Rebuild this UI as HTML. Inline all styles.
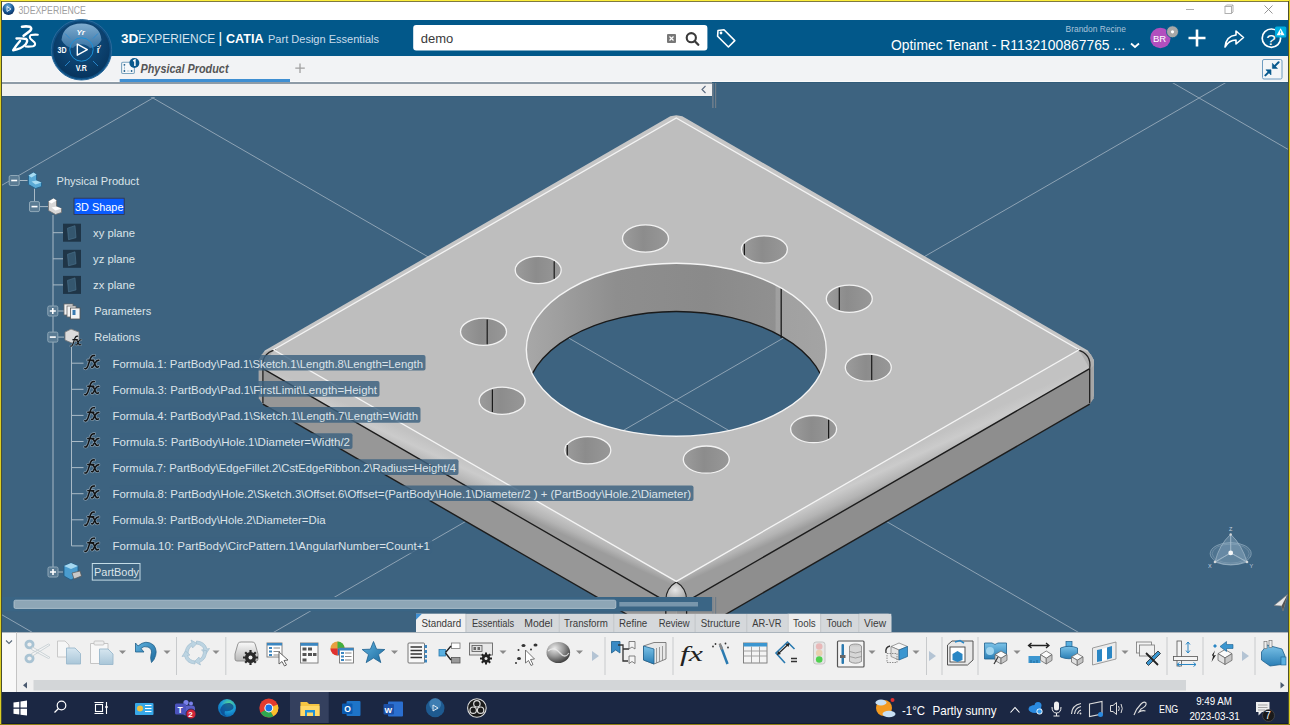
<!DOCTYPE html>
<html><head><meta charset="utf-8">
<style>
*{margin:0;padding:0;box-sizing:border-box}
html,body{width:1290px;height:725px;overflow:hidden;background:#3d6380;font-family:"Liberation Sans",sans-serif;position:relative}
.a{position:absolute}
.t{position:absolute;white-space:nowrap;line-height:1}
#title{left:0;top:0;width:1290px;height:20px;background:#fff}
#hdr{left:0;top:20px;width:1290px;height:36px;background:#02588a}
#tabs{left:0;top:56px;width:1290px;height:26px;background:#f2f3f5;border-bottom:1px solid #f9fafa}
#phdr{left:0;top:82px;width:712px;height:15px;background:#f0f0f0;border-top:2px solid #8e9ba6;border-bottom:1px solid #355d7a}
#tb{left:0;top:632px;width:1290px;height:60px;background:#f0f0f0}
#task{left:0;top:692px;width:1290px;height:33px;background:#1b2743}
.tree{color:#e6ecf0;font-size:11px}
.fb{position:absolute;height:16px;background:rgba(45,90,125,0.7);border-radius:2px}
.st{position:absolute;top:614px;height:18px;background:#d5d8db;border-right:1px solid #c3c7ca}
.stx{position:absolute;top:618px;font-size:11px;color:#3a3a3a;white-space:nowrap;line-height:1}
</style></head><body>
<svg class="a" style="left:0;top:0" width="1290" height="725" viewBox="0 0 1290 725"><defs><clipPath id="vpc"><rect x="2" y="82" width="1286" height="550"/></clipPath></defs><g clip-path="url(#vpc)"><line x1="0" y1="9.7" x2="1290" y2="754.5" stroke="#8ea3b4" stroke-width="1" /><line x1="0" y1="790.3" x2="1290" y2="45.5" stroke="#8ea3b4" stroke-width="1" /><line x1="0" y1="-594.3" x2="1290" y2="150.5" stroke="#8ea3b4" stroke-width="1" /><line x1="0" y1="186.3" x2="1290" y2="-558.5" stroke="#8ea3b4" stroke-width="1" /><line x1="0" y1="613.7" x2="1290" y2="1358.5" stroke="#8ea3b4" stroke-width="1" /><line x1="0" y1="1394.3" x2="1290" y2="649.5" stroke="#8ea3b4" stroke-width="1" /><defs><linearGradient id="filR" gradientUnits="userSpaceOnUse" x1="900" y1="452" x2="912" y2="478"><stop offset="0" stop-color="#c2c2c2"/><stop offset="0.35" stop-color="#cbcbcb"/><stop offset="0.75" stop-color="#b4b4b4"/><stop offset="1" stop-color="#9c9c9c"/></linearGradient><linearGradient id="filL" gradientUnits="userSpaceOnUse" x1="452" y1="452" x2="440" y2="478"><stop offset="0" stop-color="#c2c2c2"/><stop offset="0.35" stop-color="#cbcbcb"/><stop offset="0.75" stop-color="#b4b4b4"/><stop offset="1" stop-color="#9c9c9c"/></linearGradient><linearGradient id="wallBig" gradientUnits="userSpaceOnUse" x1="526" y1="0" x2="826" y2="0"><stop offset="0" stop-color="#a8a8a8"/><stop offset="0.3" stop-color="#8e8e8e"/><stop offset="0.6" stop-color="#8a8a8a"/><stop offset="0.83" stop-color="#909090"/><stop offset="0.834" stop-color="#a0a0a0"/><stop offset="1" stop-color="#a4a4a4"/></linearGradient><radialGradient id="cornerG" cx="0.4" cy="0.4" r="0.6"><stop offset="0" stop-color="#d0d0d0"/><stop offset="1" stop-color="#9a9a9a"/></radialGradient></defs><polygon points="670.3,116.3 676.3,115.2 682.3,116.3 1087.8,350.4 1093.8,359.8 1093.8,395.9 1087.7,405.4 676.3,642.9 264.9,405.4 258.8,395.9 258.8,359.8 264.8,350.4" fill="#c6c6c6" /><polygon points="262.9,368.7 676.3,607.4 676.3,642.9 262.9,404.2" fill="#979797" /><polygon points="676.3,607.4 1089.7,368.7 1089.7,404.2 676.3,642.9" fill="#8e8e8e" /><polygon points="1089.7,368.7 1093.8,364.7 1093.8,398.2 1089.7,404.2" fill="#a6a6a6" /><polygon points="262.9,368.7 258.8,364.7 258.8,398.2 262.9,404.2" fill="#a6a6a6" /><polygon points="676.3,581.4 1079.0,349.7 1089.7,368.7 676.3,607.4" fill="url(#filR)" /><polygon points="676.3,581.4 273.6,349.7 262.9,368.7 676.3,607.4" fill="url(#filL)" /><path d="M1079,349.7 Q1094.8,350.7 1093.8,365.7235099999999 L1089.7,368.7235099999999 Z" fill="#b0b0b0"/><path d="M273.6,349.7 Q257.8,350.7 258.8,365.72351 L262.9,368.72351 Z" fill="#b0b0b0"/><polygon points="676.3,118.0 1079.0,349.7 676.3,581.4 273.6,349.7" fill="#bebebe" /><polyline points="262.9,368.7 676.3,607.4 1089.7,368.7" fill="none" stroke="#1c1c1c" stroke-width="1.4"/><polyline points="262.9,404.2 676.3,642.9 1089.7,404.2" fill="none" stroke="#1c1c1c" stroke-width="1.4"/><line x1="1089.7" y1="368.7" x2="1089.7" y2="403.2" stroke="#1c1c1c" stroke-width="1.3"/><line x1="262.9" y1="368.7" x2="262.9" y2="403.2" stroke="#1c1c1c" stroke-width="1.3"/><path d="M1077,349.7 Q1091.8,353.7 1089.7,368.7235099999999" fill="none" stroke="#222" stroke-width="1.2"/><path d="M275.6,349.7 Q260.8,353.7 262.9,368.72351" fill="none" stroke="#222" stroke-width="1.2"/><radialGradient id="lensG" cx="0.45" cy="0.45" r="0.6"><stop offset="0" stop-color="#e6e6e6"/><stop offset="1" stop-color="#a8a8a8"/></radialGradient><path d="M665.8,600 Q666,588 676.3,582 Q686.5,588 686.6,600 Z" fill="url(#lensG)" stroke="#222" stroke-width="1.2"/><path d="M665.8,597 V640 M686.6,597 V640" stroke="#1c1c1c" stroke-width="1.3"/><rect x="712.3" y="597" width="1.2" height="35" fill="#7a8590"/><rect x="715" y="597" width="1.2" height="35" fill="#6f7c88"/><polygon points="676.3,118.0 1079.0,349.7 676.3,581.4 273.6,349.7" fill="none" stroke="#f4f4f4" stroke-width="1.3"/><clipPath id="bigTop"><ellipse cx="676.3" cy="349.7" rx="150" ry="86.5"/></clipPath><ellipse cx="676.3" cy="349.7" rx="150" ry="86.5" fill="url(#wallBig)"/><g clip-path="url(#bigTop)"><ellipse cx="676.3" cy="398.0" rx="150" ry="86.5" fill="#3d6380"/><clipPath id="bigBot"><ellipse cx="676.3" cy="398.0" rx="150" ry="86.5"/></clipPath><g clip-path="url(#bigBot)"><line x1="0" y1="9.7" x2="1290" y2="754.5" stroke="#8ea3b4" stroke-width="1" /><line x1="0" y1="790.3" x2="1290" y2="45.5" stroke="#8ea3b4" stroke-width="1" /><line x1="0" y1="-594.3" x2="1290" y2="150.5" stroke="#8ea3b4" stroke-width="1" /><line x1="0" y1="186.3" x2="1290" y2="-558.5" stroke="#8ea3b4" stroke-width="1" /><line x1="0" y1="613.7" x2="1290" y2="1358.5" stroke="#8ea3b4" stroke-width="1" /><line x1="0" y1="1394.3" x2="1290" y2="649.5" stroke="#8ea3b4" stroke-width="1" /></g><ellipse cx="676.3" cy="398.0" rx="150" ry="86.5" fill="none" stroke="#1a1a1a" stroke-width="1.3"/><line x1="781.2" y1="285" x2="781.2" y2="338" stroke="#1a1a1a" stroke-width="1.3"/></g><ellipse cx="676.3" cy="349.7" rx="150" ry="86.5" fill="none" stroke="#f4f4f4" stroke-width="1.4"/><linearGradient id="hg0" gradientUnits="userSpaceOnUse" x1="622.5" y1="0" x2="668.5" y2="0"><stop offset="0" stop-color="#9c9c9c"/><stop offset="0.45" stop-color="#8c8c8c"/><stop offset="1" stop-color="#989898"/></linearGradient><ellipse cx="645.5" cy="238.5" rx="23" ry="13.6" fill="url(#hg0)" stroke="#f2f2f2" stroke-width="1.3"/><linearGradient id="hg1" gradientUnits="userSpaceOnUse" x1="741.4" y1="0" x2="787.4" y2="0"><stop offset="0" stop-color="#9c9c9c"/><stop offset="0.45" stop-color="#8c8c8c"/><stop offset="1" stop-color="#989898"/></linearGradient><ellipse cx="764.4" cy="249.5" rx="23" ry="13.6" fill="url(#hg1)" stroke="#f2f2f2" stroke-width="1.3"/><line x1="744.4" y1="243.8" x2="744.4" y2="255.2" stroke="#1a1a1a" stroke-width="1.2"/><linearGradient id="hg2" gradientUnits="userSpaceOnUse" x1="826.3" y1="0" x2="872.3" y2="0"><stop offset="0" stop-color="#9c9c9c"/><stop offset="0.45" stop-color="#8c8c8c"/><stop offset="1" stop-color="#989898"/></linearGradient><ellipse cx="849.3" cy="298.7" rx="23" ry="13.6" fill="url(#hg2)" stroke="#f2f2f2" stroke-width="1.3"/><line x1="839.3" y1="287.5" x2="839.3" y2="309.9" stroke="#1a1a1a" stroke-width="1.2"/><linearGradient id="hg3" gradientUnits="userSpaceOnUse" x1="845.3" y1="0" x2="891.3" y2="0"><stop offset="0" stop-color="#9c9c9c"/><stop offset="0.45" stop-color="#8c8c8c"/><stop offset="1" stop-color="#989898"/></linearGradient><ellipse cx="868.3" cy="367.6" rx="23" ry="13.6" fill="url(#hg3)" stroke="#f2f2f2" stroke-width="1.3"/><line x1="871.6999999999999" y1="355.1" x2="871.6999999999999" y2="380.1" stroke="#1a1a1a" stroke-width="1.2"/><linearGradient id="hg4" gradientUnits="userSpaceOnUse" x1="790.6" y1="0" x2="836.6" y2="0"><stop offset="0" stop-color="#9c9c9c"/><stop offset="0.45" stop-color="#8c8c8c"/><stop offset="1" stop-color="#989898"/></linearGradient><ellipse cx="813.6" cy="429.1" rx="23" ry="13.6" fill="url(#hg4)" stroke="#f2f2f2" stroke-width="1.3"/><line x1="828.6" y1="419.8" x2="828.6" y2="438.4" stroke="#1a1a1a" stroke-width="1.2"/><linearGradient id="hg5" gradientUnits="userSpaceOnUse" x1="683.3" y1="0" x2="729.3" y2="0"><stop offset="0" stop-color="#9c9c9c"/><stop offset="0.45" stop-color="#8c8c8c"/><stop offset="1" stop-color="#989898"/></linearGradient><ellipse cx="706.3" cy="459.6" rx="23" ry="13.6" fill="url(#hg5)" stroke="#f2f2f2" stroke-width="1.3"/><linearGradient id="hg6" gradientUnits="userSpaceOnUse" x1="564.8" y1="0" x2="610.8" y2="0"><stop offset="0" stop-color="#9c9c9c"/><stop offset="0.45" stop-color="#8c8c8c"/><stop offset="1" stop-color="#989898"/></linearGradient><ellipse cx="587.8" cy="450.3" rx="23" ry="13.6" fill="url(#hg6)" stroke="#f2f2f2" stroke-width="1.3"/><line x1="567.3" y1="445.1" x2="567.3" y2="455.5" stroke="#1a1a1a" stroke-width="1.2"/><linearGradient id="hg7" gradientUnits="userSpaceOnUse" x1="479.1" y1="0" x2="525.1" y2="0"><stop offset="0" stop-color="#9c9c9c"/><stop offset="0.45" stop-color="#8c8c8c"/><stop offset="1" stop-color="#989898"/></linearGradient><ellipse cx="502.1" cy="400.8" rx="23" ry="13.6" fill="url(#hg7)" stroke="#f2f2f2" stroke-width="1.3"/><line x1="492.40000000000003" y1="389.5" x2="492.40000000000003" y2="412.1" stroke="#1a1a1a" stroke-width="1.2"/><linearGradient id="hg8" gradientUnits="userSpaceOnUse" x1="460.5" y1="0" x2="506.5" y2="0"><stop offset="0" stop-color="#9c9c9c"/><stop offset="0.45" stop-color="#8c8c8c"/><stop offset="1" stop-color="#989898"/></linearGradient><ellipse cx="483.5" cy="331.8" rx="23" ry="13.6" fill="url(#hg8)" stroke="#f2f2f2" stroke-width="1.3"/><line x1="487.2" y1="319.4" x2="487.2" y2="344.2" stroke="#1a1a1a" stroke-width="1.2"/><linearGradient id="hg9" gradientUnits="userSpaceOnUse" x1="515.2" y1="0" x2="561.2" y2="0"><stop offset="0" stop-color="#9c9c9c"/><stop offset="0.45" stop-color="#8c8c8c"/><stop offset="1" stop-color="#989898"/></linearGradient><ellipse cx="538.2" cy="270" rx="23" ry="13.6" fill="url(#hg9)" stroke="#f2f2f2" stroke-width="1.3"/><line x1="554.2" y1="261.2" x2="554.2" y2="278.8" stroke="#1a1a1a" stroke-width="1.2"/><g opacity="0.95"><ellipse cx="1230.7" cy="553.6" rx="20.5" ry="11" fill="rgba(140,170,195,0.25)" stroke="#8fa9bc" stroke-width="0.8"/><ellipse cx="1230.7" cy="553.6" rx="18.5" ry="9.5" fill="none" stroke="#7f9bb0" stroke-width="0.6"/><path d="M1230.7,552.9 L1230.7,534.3 Q1242,545 1247,562 Z" fill="rgba(170,195,215,0.35)" stroke="#a9bfcf" stroke-width="0.7"/><path d="M1230.7,552.9 L1230.7,534.3 Q1219,545 1215,562 Z" fill="rgba(170,195,215,0.3)" stroke="#a9bfcf" stroke-width="0.7"/><path d="M1230.7,552.9 L1215,562 Q1230.7,568 1247,562 Z" fill="rgba(150,180,200,0.3)" stroke="#a9bfcf" stroke-width="0.7"/><circle cx="1230.7" cy="552.9" r="2.4" fill="#fff"/><circle cx="1230.7" cy="534.5" r="1.2" fill="#ddd"/><circle cx="1215" cy="562" r="1.3" fill="#ddd"/><circle cx="1247" cy="562" r="1.3" fill="#ddd"/><g font-family="Liberation Sans" font-size="5.5" fill="#cdd8e0"><text x="1229" y="531">Z</text><text x="1208" y="567.5">X</text><text x="1249.5" y="567.5">Y</text></g></g><path d="M1287.5,594.5 L1274,605.5 L1281.5,606 L1283,611 Z" fill="#e8e8e8" stroke="#777" stroke-width="0.6"/><path d="M1287.5,594.5 L1281.5,606 L1283,611 Z" fill="#555"/></g></svg>
<svg class="a" style="left:0;top:0" width="760" height="612" viewBox="0 0 760 612"><rect x="110" y="354.9" width="315.5" height="15.7" rx="2" fill="rgba(60,98,128,0.82)"/><rect x="110" y="381.0" width="269.5" height="15.7" rx="2" fill="rgba(60,98,128,0.82)"/><rect x="110" y="407.1" width="310.5" height="15.7" rx="2" fill="rgba(60,98,128,0.82)"/><rect x="110" y="433.2" width="242.5" height="15.7" rx="2" fill="rgba(60,98,128,0.82)"/><rect x="110" y="459.3" width="348.5" height="15.7" rx="2" fill="rgba(60,98,128,0.82)"/><rect x="110" y="485.4" width="583.5" height="15.7" rx="2" fill="rgba(60,98,128,0.82)"/><rect x="110" y="511.5" width="218.0" height="15.7" rx="2" fill="rgba(60,98,128,0.82)"/><rect x="110" y="537.6" width="322.3" height="15.7" rx="2" fill="rgba(60,98,128,0.82)"/><g stroke="#a9bac6" stroke-width="1" fill="none"><path d="M19.5,180.5 H27.5 M34.5,188.5 V201.5 M39.5,206.6 H48"/><path d="M53,215 V567.3"/><path d="M53,232.7 H63"/><path d="M53,258.8 H63"/><path d="M53,284.9 H63"/><path d="M58,311.0 H64"/><path d="M58,337.1 H64"/><path d="M71.5,345 V545.9"/><path d="M71.5,363.2 H83.5"/><path d="M71.5,389.3 H83.5"/><path d="M71.5,415.4 H83.5"/><path d="M71.5,441.5 H83.5"/><path d="M71.5,467.6 H83.5"/><path d="M71.5,493.7 H83.5"/><path d="M71.5,519.8 H83.5"/><path d="M71.5,545.9 H83.5"/><path d="M58,572.0 H63"/></g><rect x="9.2" y="175.5" width="10" height="10" rx="1.5" fill="#5a7b93" stroke="#8fa8b8" stroke-width="1"/><path d="M11.2,180.5 H17.2" stroke="#fff" stroke-width="1.6"/><rect x="29.5" y="201.6" width="10" height="10" rx="1.5" fill="#5a7b93" stroke="#8fa8b8" stroke-width="1"/><path d="M31.5,206.6 H37.5" stroke="#fff" stroke-width="1.6"/><rect x="47.8" y="306.0" width="10" height="10" rx="1.5" fill="#5a7b93" stroke="#8fa8b8" stroke-width="1"/><path d="M49.8,311.0 H55.8 M52.8,308.0 V314.0" stroke="#fff" stroke-width="1.6"/><rect x="47.8" y="332.1" width="10" height="10" rx="1.5" fill="#5a7b93" stroke="#8fa8b8" stroke-width="1"/><path d="M49.8,337.1 H55.8" stroke="#fff" stroke-width="1.6"/><rect x="48.0" y="567.0" width="10" height="10" rx="1.5" fill="#5a7b93" stroke="#8fa8b8" stroke-width="1"/><path d="M50.0,572.0 H56.0 M53.0,569.0 V575.0" stroke="#fff" stroke-width="1.6"/><path d="M28.5,175.5 L33.5,172.5 L36.5,174.5 L36.5,180.5 L41.5,182.5 L41.5,186.5 L35.5,188.5 L28.5,184.5 Z" fill="#5aaad6" stroke="#1e5f8a" stroke-width="0.8"/><path d="M28.5,175.5 L33.5,172.5 L36.5,174.5 L31.5,177.5 Z" fill="#a8dcf2"/><path d="M31.5,181.5 L36.5,180.5 L41.5,182.5 L35.5,184.5 Z" fill="#a8dcf2"/><path d="M48.5,201.5 L53.5,198.5 L56.5,200.5 L56.5,206.5 L61.5,208.5 L61.5,212.5 L55.5,214.5 L48.5,210.5 Z" fill="#d8d8d8" stroke="#707070" stroke-width="0.8"/><path d="M48.5,201.5 L53.5,198.5 L56.5,200.5 L51.5,203.5 Z" fill="#ffffff"/><path d="M51.5,207.5 L56.5,206.5 L61.5,208.5 L55.5,210.5 Z" fill="#ffffff"/><rect x="63" y="223.7" width="18" height="18" fill="#1f3547"/><path d="M67.5,228.2 L75,225.7 L76,237.7 L68.5,239.7 Z" fill="#34566e" stroke="#4e7690" stroke-width="0.6"/><rect x="63" y="249.8" width="18" height="18" fill="#1f3547"/><path d="M67.5,254.3 L75,251.8 L76,263.8 L68.5,265.8 Z" fill="#34566e" stroke="#4e7690" stroke-width="0.6"/><rect x="63" y="275.9" width="18" height="18" fill="#1f3547"/><path d="M67.5,280.4 L75,277.9 L76,289.9 L68.5,291.9 Z" fill="#34566e" stroke="#4e7690" stroke-width="0.6"/><rect x="64" y="304.0" width="9" height="11" fill="#f4f4f4" stroke="#666" stroke-width="0.8"/><rect x="67" y="306.0" width="9" height="11" fill="#f4f4f4" stroke="#666" stroke-width="0.8"/><rect x="70.5" y="308.0" width="9.5" height="11" fill="#f4f4f4" stroke="#555" stroke-width="0.8"/><rect x="72.5" y="310.0" width="3" height="5" fill="#3a7ab0"/><path d="M65,332.1 L71,329.1 L79,332.1 L79,340.1 L72,343.1 L65,340.1 Z" fill="#dcdcdc" stroke="#777" stroke-width="0.8"/><path d="M70.6,345.95000000000005 Q71.875,346.70000000000005 73.0,343.85 L74.875,338.225 Q75.85,335.82500000000005 77.875,336.20000000000005 M72.85,339.65000000000003 H77.35 M75.4,339.95000000000005 Q76.75,339.35 77.875,341.975 L79.0,344.45000000000005 Q79.75,345.35 80.875,344.6 M81.1,339.8 Q79.6,339.5 78.25,341.975 L77.125,344.225 Q76.45,345.35 75.7,344.90000000000003" fill="none" stroke="#b9c6cf" stroke-opacity="0.55" stroke-width="2.25" stroke-linecap="round"/><path d="M70.6,345.95000000000005 Q71.875,346.70000000000005 73.0,343.85 L74.875,338.225 Q75.85,335.82500000000005 77.875,336.20000000000005 M72.85,339.65000000000003 H77.35 M75.4,339.95000000000005 Q76.75,339.35 77.875,341.975 L79.0,344.45000000000005 Q79.75,345.35 80.875,344.6 M81.1,339.8 Q79.6,339.5 78.25,341.975 L77.125,344.225 Q76.45,345.35 75.7,344.90000000000003" fill="none" stroke="#121212" stroke-width="1.09" stroke-linecap="round"/><path d="M84.8,368.5 Q86.5,369.5 88.0,365.7 L90.5,358.2 Q91.8,355.0 94.5,355.5 M87.8,360.09999999999997 H93.8 M91.2,360.5 Q93.0,359.7 94.5,363.2 L96.0,366.5 Q97.0,367.7 98.5,366.7 M98.8,360.3 Q96.8,359.9 95.0,363.2 L93.5,366.2 Q92.6,367.7 91.6,367.09999999999997" fill="none" stroke="#b9c6cf" stroke-opacity="0.55" stroke-width="3.00" stroke-linecap="round"/><path d="M84.8,368.5 Q86.5,369.5 88.0,365.7 L90.5,358.2 Q91.8,355.0 94.5,355.5 M87.8,360.09999999999997 H93.8 M91.2,360.5 Q93.0,359.7 94.5,363.2 L96.0,366.5 Q97.0,367.7 98.5,366.7 M98.8,360.3 Q96.8,359.9 95.0,363.2 L93.5,366.2 Q92.6,367.7 91.6,367.09999999999997" fill="none" stroke="#121212" stroke-width="1.45" stroke-linecap="round"/><path d="M84.8,394.6 Q86.5,395.6 88.0,391.8 L90.5,384.3 Q91.8,381.1 94.5,381.6 M87.8,386.2 H93.8 M91.2,386.6 Q93.0,385.8 94.5,389.3 L96.0,392.6 Q97.0,393.8 98.5,392.8 M98.8,386.40000000000003 Q96.8,386.0 95.0,389.3 L93.5,392.3 Q92.6,393.8 91.6,393.2" fill="none" stroke="#b9c6cf" stroke-opacity="0.55" stroke-width="3.00" stroke-linecap="round"/><path d="M84.8,394.6 Q86.5,395.6 88.0,391.8 L90.5,384.3 Q91.8,381.1 94.5,381.6 M87.8,386.2 H93.8 M91.2,386.6 Q93.0,385.8 94.5,389.3 L96.0,392.6 Q97.0,393.8 98.5,392.8 M98.8,386.40000000000003 Q96.8,386.0 95.0,389.3 L93.5,392.3 Q92.6,393.8 91.6,393.2" fill="none" stroke="#121212" stroke-width="1.45" stroke-linecap="round"/><path d="M84.8,420.70000000000005 Q86.5,421.70000000000005 88.0,417.90000000000003 L90.5,410.40000000000003 Q91.8,407.20000000000005 94.5,407.70000000000005 M87.8,412.3 H93.8 M91.2,412.70000000000005 Q93.0,411.90000000000003 94.5,415.40000000000003 L96.0,418.70000000000005 Q97.0,419.90000000000003 98.5,418.90000000000003 M98.8,412.50000000000006 Q96.8,412.1 95.0,415.40000000000003 L93.5,418.40000000000003 Q92.6,419.90000000000003 91.6,419.3" fill="none" stroke="#b9c6cf" stroke-opacity="0.55" stroke-width="3.00" stroke-linecap="round"/><path d="M84.8,420.70000000000005 Q86.5,421.70000000000005 88.0,417.90000000000003 L90.5,410.40000000000003 Q91.8,407.20000000000005 94.5,407.70000000000005 M87.8,412.3 H93.8 M91.2,412.70000000000005 Q93.0,411.90000000000003 94.5,415.40000000000003 L96.0,418.70000000000005 Q97.0,419.90000000000003 98.5,418.90000000000003 M98.8,412.50000000000006 Q96.8,412.1 95.0,415.40000000000003 L93.5,418.40000000000003 Q92.6,419.90000000000003 91.6,419.3" fill="none" stroke="#121212" stroke-width="1.45" stroke-linecap="round"/><path d="M84.8,446.8 Q86.5,447.8 88.0,444.0 L90.5,436.5 Q91.8,433.3 94.5,433.8 M87.8,438.4 H93.8 M91.2,438.8 Q93.0,438.0 94.5,441.5 L96.0,444.8 Q97.0,446.0 98.5,445.0 M98.8,438.6 Q96.8,438.2 95.0,441.5 L93.5,444.5 Q92.6,446.0 91.6,445.4" fill="none" stroke="#b9c6cf" stroke-opacity="0.55" stroke-width="3.00" stroke-linecap="round"/><path d="M84.8,446.8 Q86.5,447.8 88.0,444.0 L90.5,436.5 Q91.8,433.3 94.5,433.8 M87.8,438.4 H93.8 M91.2,438.8 Q93.0,438.0 94.5,441.5 L96.0,444.8 Q97.0,446.0 98.5,445.0 M98.8,438.6 Q96.8,438.2 95.0,441.5 L93.5,444.5 Q92.6,446.0 91.6,445.4" fill="none" stroke="#121212" stroke-width="1.45" stroke-linecap="round"/><path d="M84.8,472.90000000000003 Q86.5,473.90000000000003 88.0,470.1 L90.5,462.6 Q91.8,459.40000000000003 94.5,459.90000000000003 M87.8,464.5 H93.8 M91.2,464.90000000000003 Q93.0,464.1 94.5,467.6 L96.0,470.90000000000003 Q97.0,472.1 98.5,471.1 M98.8,464.70000000000005 Q96.8,464.3 95.0,467.6 L93.5,470.6 Q92.6,472.1 91.6,471.5" fill="none" stroke="#b9c6cf" stroke-opacity="0.55" stroke-width="3.00" stroke-linecap="round"/><path d="M84.8,472.90000000000003 Q86.5,473.90000000000003 88.0,470.1 L90.5,462.6 Q91.8,459.40000000000003 94.5,459.90000000000003 M87.8,464.5 H93.8 M91.2,464.90000000000003 Q93.0,464.1 94.5,467.6 L96.0,470.90000000000003 Q97.0,472.1 98.5,471.1 M98.8,464.70000000000005 Q96.8,464.3 95.0,467.6 L93.5,470.6 Q92.6,472.1 91.6,471.5" fill="none" stroke="#121212" stroke-width="1.45" stroke-linecap="round"/><path d="M84.8,499.00000000000006 Q86.5,500.00000000000006 88.0,496.20000000000005 L90.5,488.70000000000005 Q91.8,485.50000000000006 94.5,486.00000000000006 M87.8,490.6 H93.8 M91.2,491.00000000000006 Q93.0,490.20000000000005 94.5,493.70000000000005 L96.0,497.00000000000006 Q97.0,498.20000000000005 98.5,497.20000000000005 M98.8,490.80000000000007 Q96.8,490.40000000000003 95.0,493.70000000000005 L93.5,496.70000000000005 Q92.6,498.20000000000005 91.6,497.6" fill="none" stroke="#b9c6cf" stroke-opacity="0.55" stroke-width="3.00" stroke-linecap="round"/><path d="M84.8,499.00000000000006 Q86.5,500.00000000000006 88.0,496.20000000000005 L90.5,488.70000000000005 Q91.8,485.50000000000006 94.5,486.00000000000006 M87.8,490.6 H93.8 M91.2,491.00000000000006 Q93.0,490.20000000000005 94.5,493.70000000000005 L96.0,497.00000000000006 Q97.0,498.20000000000005 98.5,497.20000000000005 M98.8,490.80000000000007 Q96.8,490.40000000000003 95.0,493.70000000000005 L93.5,496.70000000000005 Q92.6,498.20000000000005 91.6,497.6" fill="none" stroke="#121212" stroke-width="1.45" stroke-linecap="round"/><path d="M84.8,525.1 Q86.5,526.1 88.0,522.3 L90.5,514.8 Q91.8,511.6 94.5,512.1 M87.8,516.7 H93.8 M91.2,517.1 Q93.0,516.3 94.5,519.8 L96.0,523.1 Q97.0,524.3 98.5,523.3 M98.8,516.9 Q96.8,516.5 95.0,519.8 L93.5,522.8 Q92.6,524.3 91.6,523.7" fill="none" stroke="#b9c6cf" stroke-opacity="0.55" stroke-width="3.00" stroke-linecap="round"/><path d="M84.8,525.1 Q86.5,526.1 88.0,522.3 L90.5,514.8 Q91.8,511.6 94.5,512.1 M87.8,516.7 H93.8 M91.2,517.1 Q93.0,516.3 94.5,519.8 L96.0,523.1 Q97.0,524.3 98.5,523.3 M98.8,516.9 Q96.8,516.5 95.0,519.8 L93.5,522.8 Q92.6,524.3 91.6,523.7" fill="none" stroke="#121212" stroke-width="1.45" stroke-linecap="round"/><path d="M84.8,551.2 Q86.5,552.2 88.0,548.4000000000001 L90.5,540.9000000000001 Q91.8,537.7 94.5,538.2 M87.8,542.8000000000001 H93.8 M91.2,543.2 Q93.0,542.4000000000001 94.5,545.9000000000001 L96.0,549.2 Q97.0,550.4000000000001 98.5,549.4000000000001 M98.8,543.0000000000001 Q96.8,542.6000000000001 95.0,545.9000000000001 L93.5,548.9000000000001 Q92.6,550.4000000000001 91.6,549.8000000000001" fill="none" stroke="#b9c6cf" stroke-opacity="0.55" stroke-width="3.00" stroke-linecap="round"/><path d="M84.8,551.2 Q86.5,552.2 88.0,548.4000000000001 L90.5,540.9000000000001 Q91.8,537.7 94.5,538.2 M87.8,542.8000000000001 H93.8 M91.2,543.2 Q93.0,542.4000000000001 94.5,545.9000000000001 L96.0,549.2 Q97.0,550.4000000000001 98.5,549.4000000000001 M98.8,543.0000000000001 Q96.8,542.6000000000001 95.0,545.9000000000001 L93.5,548.9000000000001 Q92.6,550.4000000000001 91.6,549.8000000000001" fill="none" stroke="#121212" stroke-width="1.45" stroke-linecap="round"/><path d="M64,566.0 L71,563.0 L78,566.0 L78,576.0 L71,580.0 L64,576.0 Z" fill="#4a9cce" stroke="#1d5a85" stroke-width="0.8"/><path d="M64,566.0 L71,563.0 L78,566.0 L71,569.0 Z" fill="#a6d8f0"/><path d="M72,573.0 L80,571.0 L81.5,576.0 L74,579.0 Z" fill="#c8c8c8" stroke="#555" stroke-width="0.7"/><rect x="74" y="198.2" width="50.2" height="16.3" fill="#0a5cff" stroke="#334" stroke-width="0.8"/><rect x="92.3" y="563.5" width="47.7" height="16.6" fill="none" stroke="#c4dce6" stroke-width="1"/><g font-family="Liberation Sans" font-size="11" fill="#dbe3e9"><text x="56.5" y="184.8" textLength="82.5" lengthAdjust="spacingAndGlyphs">Physical Product</text><text x="75" y="210.9" fill="#fff" textLength="48.5" lengthAdjust="spacingAndGlyphs">3D Shape</text><text x="93" y="237.0" textLength="42" lengthAdjust="spacingAndGlyphs">xy plane</text><text x="93" y="263.1" textLength="42" lengthAdjust="spacingAndGlyphs">yz plane</text><text x="93" y="289.2" textLength="42" lengthAdjust="spacingAndGlyphs">zx plane</text><text x="94.2" y="315.3" textLength="57" lengthAdjust="spacingAndGlyphs">Parameters</text><text x="94.2" y="341.4" textLength="46" lengthAdjust="spacingAndGlyphs">Relations</text><text x="94" y="576.3" textLength="45" lengthAdjust="spacingAndGlyphs">PartBody</text><text x="112.5" y="367.5" textLength="310.5" lengthAdjust="spacingAndGlyphs">Formula.1: PartBody\Pad.1\Sketch.1\Length.8\Length=Length</text><text x="112.5" y="393.6" textLength="264.5" lengthAdjust="spacingAndGlyphs">Formula.3: PartBody\Pad.1\FirstLimit\Length=Height</text><text x="112.5" y="419.7" textLength="305.5" lengthAdjust="spacingAndGlyphs">Formula.4: PartBody\Pad.1\Sketch.1\Length.7\Length=Width</text><text x="112.5" y="445.8" textLength="237.5" lengthAdjust="spacingAndGlyphs">Formula.5: PartBody\Hole.1\Diameter=Width/2</text><text x="112.5" y="471.9" textLength="343.5" lengthAdjust="spacingAndGlyphs">Formula.7: PartBody\EdgeFillet.2\CstEdgeRibbon.2\Radius=Height/4</text><text x="112.5" y="498.0" textLength="578.5" lengthAdjust="spacingAndGlyphs">Formula.8: PartBody\Hole.2\Sketch.3\Offset.6\Offset=(PartBody\Hole.1\Diameter/2 ) + (PartBody\Hole.2\Diameter)</text><text x="112.5" y="524.1" textLength="213" lengthAdjust="spacingAndGlyphs">Formula.9: PartBody\Hole.2\Diameter=Dia</text><text x="112.5" y="550.2" textLength="317.3" lengthAdjust="spacingAndGlyphs">Formula.10: PartBody\CircPattern.1\AngularNumber=Count+1</text></g><rect x="2" y="597" width="710" height="14.2" fill="#3a6585"/><rect x="14" y="600.2" width="601.8" height="8.2" rx="1.5" fill="#8ea6b6" stroke="#b8c8d2" stroke-width="0.8"/><rect x="619.3" y="602" width="78.7" height="4.5" fill="#7896ac"/></svg>
<div id="title" class="a"></div>
<div id="hdr" class="a"></div>
<div id="tabs" class="a"></div>
<div class="a" style="left:0;top:82px;width:1290px;height:1px;background:#315b79"></div>
<div id="phdr" class="a"></div>
<svg class="a" style="left:0;top:0" width="1290" height="110" viewBox="0 0 1290 110"><defs><radialGradient id="tic" cx="0.45" cy="0.3" r="0.7"><stop offset="0" stop-color="#6fb0e0"/><stop offset="0.6" stop-color="#1a5a98"/><stop offset="1" stop-color="#0a2f60"/></radialGradient><radialGradient id="cmpD" cx="0.5" cy="0.35" r="0.7"><stop offset="0" stop-color="#135488"/><stop offset="1" stop-color="#06325a"/></radialGradient><linearGradient id="cmpT" x1="0" y1="0" x2="0" y2="1"><stop offset="0" stop-color="#8cb8da"/><stop offset="1" stop-color="#3d78a8"/></linearGradient></defs><circle cx="8.5" cy="9" r="6" fill="url(#tic)"/><path d="M7,6.5 L7,11.5 L11,9 Z" fill="none" stroke="#fff" stroke-width="0.8"/><text x="18.5" y="13.5" font-family="Liberation Sans" font-size="10.3" fill="#a0a0a0" textLength="67.4" lengthAdjust="spacingAndGlyphs">3DEXPERIENCE</text><line x1="1186" y1="9.5" x2="1194" y2="9.5" stroke="#b0b0b0" stroke-width="1"/><rect x="1225" y="6.5" width="6.5" height="7" fill="none" stroke="#a8a8a8" stroke-width="0.9"/><path d="M1225,6.5 L1226.5,5 H1233 V12 L1231.5,13.5 M1231.5,6.5 L1233,5" fill="none" stroke="#a8a8a8" stroke-width="0.9"/><path d="M1264.5,5.5 L1272.5,13.5 M1272.5,5.5 L1264.5,13.5" stroke="#8a8a8a" stroke-width="0.9"/><g fill="none" stroke="#fff" stroke-linecap="round" stroke-linejoin="round"><path d="M22,26.8 Q26,26 30,26.8 Q32.3,28.2 30.2,30.8 L23.6,35.8" stroke-width="2.6"/><path d="M16.5,38.5 Q22,38.2 26.2,39 Q28.5,40.5 25.5,44.5 Q21,49 13.2,50.2 Q16,45.5 20,41" stroke-width="2.4"/><path d="M37.8,34.7 Q34,34.4 31,35 Q28.6,36.8 31,39.2 L34.6,42.5 Q36.2,45.2 33,46.2 Q29.5,46.8 25.8,46.5" stroke-width="2.1"/></g><circle cx="81.5" cy="49.8" r="30.2" fill="#0e5084" stroke="#2a6a9c" stroke-width="1"/><circle cx="81.5" cy="49.8" r="28.3" fill="url(#cmpD)"/><path d="M61.5,40 Q63,24 81.5,23.5 Q100,24 101.5,40 Q98,47 90,48 A11.7,11.7 0 0 0 73,48 Q65,47 61.5,40 Z" fill="url(#cmpT)" opacity="0.9"/><circle cx="81.5" cy="49.5" r="11.7" fill="none" stroke="#1a90d8" stroke-width="1"/><path d="M77.3,44.2 L77.3,55.2 L87.3,49.7 Z" fill="none" stroke="#fff" stroke-width="1.4" stroke-linejoin="round"/><g stroke="#2a8ad0" stroke-width="0.9"><line x1="65" y1="33.5" x2="70" y2="38.5"/><line x1="98" y1="33.5" x2="93" y2="38.5"/><line x1="65" y1="66" x2="70" y2="61"/><line x1="98" y1="66" x2="93" y2="61"/></g><g font-family="Liberation Sans" font-weight="bold" fill="#fff"><text x="57.5" y="53" font-size="8.5" textLength="9" lengthAdjust="spacingAndGlyphs">3D</text><text x="96.8" y="53" font-size="9">i</text><text x="98.8" y="48.5" font-size="6" font-style="italic">/</text><text x="75.8" y="70.5" font-size="8.5" textLength="11" lengthAdjust="spacingAndGlyphs">V.R</text><text x="76.5" y="34.8" font-size="8" font-style="italic">Yr</text></g><text y="43.3" font-family="Liberation Sans" fill="#fff"><tspan x="121" font-size="13.5" font-weight="bold">3D</tspan><tspan font-size="13.5" fill="#d6e4ef" textLength="77" lengthAdjust="spacingAndGlyphs">EXPERIENCE</tspan><tspan x="218.5" font-size="14">|</tspan><tspan x="226" font-size="13.5" font-weight="bold" textLength="37.5" lengthAdjust="spacingAndGlyphs">CATIA</tspan><tspan x="268" font-size="11.5" fill="#c9dbea" textLength="111" lengthAdjust="spacingAndGlyphs">Part Design Essentials</tspan></text><rect x="413.2" y="25" width="294.2" height="25.6" rx="3" fill="#fff"/><text x="420.7" y="43" font-family="Liberation Sans" font-size="13" fill="#3a3a3a">demo</text><rect x="667" y="34" width="9" height="9" rx="1" fill="#777"/><path d="M669.5,36.5 L673.5,40.5 M673.5,36.5 L669.5,40.5" stroke="#fff" stroke-width="1.2"/><circle cx="691.3" cy="37.7" r="4.6" fill="none" stroke="#3a3a3a" stroke-width="2.1"/><line x1="694.6" y1="41" x2="698.3" y2="44.7" stroke="#3a3a3a" stroke-width="2.3" stroke-linecap="round"/><path d="M718,30.5 L724,29.8 L734.8,40.6 L728.4,47 L717.6,36.3 Z" fill="none" stroke="#fff" stroke-width="1.6" stroke-linejoin="round"/><circle cx="721" cy="33" r="1.4" fill="#fff"/><text x="1065.5" y="31.5" font-family="Liberation Sans" font-size="8.5" fill="#a9c3da" textLength="60.5" lengthAdjust="spacingAndGlyphs">Brandon Recine</text><text x="891" y="50" font-family="Liberation Sans" font-size="14.5" fill="#fff" textLength="234" lengthAdjust="spacingAndGlyphs">Optimec Tenant - R1132100867765 ...</text><path d="M1131,43.5 L1135,47 L1139,43.5" fill="none" stroke="#fff" stroke-width="1.8"/><circle cx="1160.4" cy="38" r="10.2" fill="#b24fbe"/><text x="1153" y="41.6" font-family="Liberation Sans" font-size="9.5" fill="#fff">BR</text><circle cx="1172.5" cy="31.8" r="6" fill="#a8a8a8" stroke="#02588a" stroke-width="0.8"/><circle cx="1172.5" cy="31.8" r="1.6" fill="#fff"/><path d="M1197,29.5 V46.5 M1188.5,38 H1205.5" stroke="#fff" stroke-width="2.6"/><path d="M1225,47 Q1226,36 1236,35 L1236,31 L1243.5,37.5 L1236,44 L1236,40 Q1229,40 1225,47 Z" fill="none" stroke="#fff" stroke-width="1.6" stroke-linejoin="round"/><circle cx="1271.4" cy="38.2" r="9.2" fill="none" stroke="#fff" stroke-width="1.7"/><text x="1266.3" y="44.5" font-family="Liberation Sans" font-size="15" fill="#fff" textLength="9.5" lengthAdjust="spacingAndGlyphs">?</text><rect x="1275" y="26.4" width="11.3" height="11" rx="1.5" fill="#00aee0"/><path d="M1280.6,28.2 L1284.6,35.2 L1276.6,35.2 Z" fill="#fff"/><path d="M1280.6,30.6 V33.2 M1280.6,34 V34.6" stroke="#00aee0" stroke-width="0.9"/><rect x="121.6" y="62.2" width="12.8" height="11.3" rx="1.2" fill="#f6f8fa" stroke="#7aa3be" stroke-width="1.1"/><g fill="#1d5f8e"><circle cx="124.4" cy="64.8" r="0.9"/><circle cx="124.4" cy="71" r="0.9"/><circle cx="131.6" cy="71" r="0.9"/></g><path d="M124.5,66.5 V69.5 M127,71 H129.5" stroke="#9ab8cc" stroke-width="0.8"/><circle cx="134.4" cy="63" r="5" fill="#0a5a8e"/><path d="M133.2,61 L134.9,60 V66" stroke="#fff" stroke-width="1.5" fill="none"/><text x="140.5" y="72.6" font-family="Liberation Sans" font-size="12" font-weight="bold" font-style="italic" fill="#555" textLength="88" lengthAdjust="spacingAndGlyphs">Physical Product</text><rect x="119.7" y="79" width="170.3" height="3" fill="#3f8fd2"/><path d="M300,63.5 V73 M295.3,68.2 H304.8" stroke="#a0a0a0" stroke-width="1.3"/><rect x="1262.5" y="59.5" width="19.5" height="19.5" rx="1.5" fill="#f3f5f7" stroke="#6e9cc0" stroke-width="1"/><path d="M1272.4,63.3 V68.4 H1277.5 Z M1271,69.8 H1265.9 L1271,74.9 Z" fill="#0a5a8e" stroke="#0a5a8e" stroke-width="0.6" stroke-linejoin="round"/><path d="M1274.2,66.6 L1278.6,62.2 M1269.2,71.6 L1265.4,75.4" stroke="#0a5a8e" stroke-width="2" stroke-linecap="round"/><path d="M705.5,86 L702,89.5 L705.5,93" fill="none" stroke="#5a6a80" stroke-width="1.1"/><rect x="712.3" y="83" width="1.2" height="25" fill="#7a8590"/><rect x="715" y="83" width="1.2" height="25" fill="#6f7c88"/></svg>
<svg class="a" style="left:0;top:600px" width="1290" height="35" viewBox="0 600 1290 35"><rect x="416" y="613.8" width="475.3" height="18.2" fill="#d5d8db"/><path d="M891.3,632 V617 Q891.3,613.8 888,613.8 H859" fill="#d5d8db"/><rect x="416" y="613.8" width="49.5" height="18.2" fill="#f0f0f0"/><rect x="787.6" y="613.8" width="32.6" height="18.2" fill="#ececec"/><path d="M416,613.8 H422 L416,619.8 Z" fill="#3f8fd2"/><rect x="465.5" y="614" width="1" height="18" fill="#c2c6c9"/><rect x="558.7" y="614" width="1" height="18" fill="#c2c6c9"/><rect x="613.3" y="614" width="1" height="18" fill="#c2c6c9"/><rect x="694.6" y="614" width="1" height="18" fill="#c2c6c9"/><rect x="746.3" y="614" width="1" height="18" fill="#c2c6c9"/><rect x="787.6" y="614" width="1" height="18" fill="#c2c6c9"/><rect x="820.2" y="614" width="1" height="18" fill="#c2c6c9"/><rect x="858.3" y="614" width="1" height="18" fill="#c2c6c9"/><g font-family="Liberation Sans" font-size="10.8" fill="#3a3a3a"><text x="421.5" y="627.2" textLength="39.7" lengthAdjust="spacingAndGlyphs">Standard</text><text x="471.9" y="627.2" textLength="42.2" lengthAdjust="spacingAndGlyphs">Essentials</text><text x="524.2" y="627.2" textLength="28.5" lengthAdjust="spacingAndGlyphs">Model</text><text x="563.9" y="627.2" textLength="44" lengthAdjust="spacingAndGlyphs">Transform</text><text x="619.1" y="627.2" textLength="28.1" lengthAdjust="spacingAndGlyphs">Refine</text><text x="658.7" y="627.2" textLength="31" lengthAdjust="spacingAndGlyphs">Review</text><text x="700.8" y="627.2" textLength="39.3" lengthAdjust="spacingAndGlyphs">Structure</text><text x="752.3" y="627.2" textLength="29.1" lengthAdjust="spacingAndGlyphs">AR-VR</text><text x="793" y="627.2" textLength="22.7" lengthAdjust="spacingAndGlyphs">Tools</text><text x="826.4" y="627.2" textLength="25.7" lengthAdjust="spacingAndGlyphs">Touch</text><text x="864.1" y="627.2" textLength="21.9" lengthAdjust="spacingAndGlyphs">View</text></g></svg>
<div id="tb" class="a"></div>
<svg class="a" style="left:0;top:632px" width="1290" height="60" viewBox="0 632 1290 60"><defs><linearGradient id="blu" x1="0" y1="0" x2="0" y2="1"><stop offset="0" stop-color="#7cc3e8"/><stop offset="1" stop-color="#2a7eb5"/></linearGradient><linearGradient id="blu2" x1="0" y1="0" x2="1" y2="1"><stop offset="0" stop-color="#5fb2df"/><stop offset="1" stop-color="#1c6a9e"/></linearGradient><linearGradient id="gry" x1="0" y1="0" x2="0" y2="1"><stop offset="0" stop-color="#fafafa"/><stop offset="1" stop-color="#b8b8b8"/></linearGradient><radialGradient id="sph" cx="0.35" cy="0.3" r="0.75"><stop offset="0" stop-color="#e8e8e8"/><stop offset="0.5" stop-color="#9a9a9a"/><stop offset="1" stop-color="#3a3a3a"/></radialGradient><linearGradient id="dis" x1="0" y1="0" x2="0" y2="1"><stop offset="0" stop-color="#d6e6f0"/><stop offset="1" stop-color="#a9c6d8"/></linearGradient></defs><rect x="33.5" y="680" width="1152.5" height="10.5" fill="#d3d6d8"/><path d="M27,682 L23,685.2 L27,688.5 Z" fill="#4a5a70"/><path d="M1280.5,682 L1284.5,685.2 L1280.5,688.5 Z" fill="#4a5a70"/><rect x="2" y="632" width="14" height="60" fill="#f8f8f8"/><rect x="0" y="632" width="1290" height="0.8" fill="#9aa6b0"/><rect x="16" y="632" width="1" height="60" fill="#c4c4c4"/><path d="M6,640.5 L9,643.5 L12,640.5" fill="none" stroke="#5a6a7a" stroke-width="1.1"/><rect x="176" y="637" width="1" height="38" fill="#c8cacc"/><rect x="225.3" y="637" width="1" height="38" fill="#c8cacc"/><rect x="604.5" y="637" width="1" height="38" fill="#c8cacc"/><rect x="672.5" y="637" width="1" height="38" fill="#c8cacc"/><rect x="926" y="637" width="1" height="38" fill="#c8cacc"/><rect x="941.5" y="637" width="1" height="38" fill="#c8cacc"/><rect x="977.5" y="637" width="1" height="38" fill="#c8cacc"/><rect x="1166.5" y="637" width="1" height="38" fill="#c8cacc"/><rect x="1202.5" y="637" width="1" height="38" fill="#c8cacc"/><rect x="1254.5" y="637" width="1" height="38" fill="#c8cacc"/><path d="M119.0,650.5 H126.0 L122.5,654 Z" fill="#8a8a8a"/><path d="M163.5,650.5 H170.5 L167,654 Z" fill="#8a8a8a"/><path d="M212.5,650.5 H219.5 L216,654 Z" fill="#8a8a8a"/><path d="M391.0,650.5 H398.0 L394.5,654 Z" fill="#8a8a8a"/><path d="M499.5,650.5 H506.5 L503,654 Z" fill="#8a8a8a"/><path d="M576.0,650.5 H583.0 L579.5,654 Z" fill="#8a8a8a"/><path d="M868.5,650.5 H875.5 L872,654 Z" fill="#8a8a8a"/><path d="M912.5,650.5 H919.5 L916,654 Z" fill="#8a8a8a"/><path d="M1013.5,650.5 H1020.5 L1017,654 Z" fill="#8a8a8a"/><path d="M1121.5,650.5 H1128.5 L1125,654 Z" fill="#8a8a8a"/><path d="M592,651 L599,656 L592,661 Z" fill="#b4c4d4"/><path d="M929,651 L936,656 L929,661 Z" fill="#b4c4d4"/><path d="M1242,651 L1249,656 L1242,661 Z" fill="#b4c4d4"/><g fill="none" stroke="#a9c3d3" stroke-width="2.8"><ellipse cx="29.5" cy="644.5" rx="3.6" ry="3.4"/><ellipse cx="29.5" cy="658.5" rx="3.6" ry="3.4"/></g><path d="M32.5,647 L50,657.5 L48.5,658.5 L31.5,649.5 Z M32.5,656 L50,645 L48.5,644 L31.5,653.5 Z" fill="#f4f4f4" stroke="#c6cfd4" stroke-width="0.9"/><path d="M57.5,641 H65 L69,645 V657 H57.5 Z" fill="#f6f6f6" stroke="#c4c4c4" stroke-width="0.9"/><path d="M66.5,648 H75 L80.5,653.5 V664 H66.5 Z" fill="url(#dis)" stroke="#9ab8cc" stroke-width="0.9"/><path d="M90.5,643.5 H108 V663.5 H90.5 Z" fill="#f8f8f8" stroke="#c0c0c0" stroke-width="0.9"/><rect x="94" y="641" width="10" height="4" rx="1" fill="#eee" stroke="#bbb" stroke-width="0.8"/><path d="M99.5,649 H108 L113,654 V664.5 H99.5 Z" fill="url(#dis)" stroke="#9ab8cc" stroke-width="0.9"/><path d="M138,646 Q146,639 153.5,645 Q158.5,651 154,659.5 L151.5,662.5 Q150,658 151,655 Q153,649 148,647 Q143.5,645.5 141,648.5 L144,652 L135.5,652 L135.5,643 Z" fill="url(#blu2)" stroke="#205f8a" stroke-width="0.8"/><g fill="#bcd4e2" stroke="#a3bfd0" stroke-width="0.7"><path d="M185,655 Q184.5,646 192,642.5 L191,640 L197,643.5 L192.5,648 L192,645.8 Q188,648 188,655 Z"/><path d="M196.5,641 Q205,641.5 207,649 L209.5,648.5 L206,654 L201.5,650 L204,649.5 Q202,644.5 196.5,644 Z"/><path d="M206.5,650.5 Q207,659 199.5,662.5 L200.5,665 L194.5,661.5 L199,657 L199.5,659.2 Q203.5,657 203.5,650.5 Z"/><path d="M195,664 Q186.5,663.5 184.5,656 L182,656.5 L185.5,651 L190,655 L187.5,655.5 Q189.5,660.5 195,661 Z"/></g><path d="M235,654 L238,643.5 Q239,642 241,642 H252 Q254,642 255,643.5 L258,654 V659 Q258,661 256,661 H237 Q235,661 235,659 Z" fill="url(#gry)" stroke="#8a8a8a" stroke-width="0.9"/><circle cx="250.5" cy="657.5" r="5.5" fill="#2a2a2a"/><circle cx="250.5" cy="657.5" r="2" fill="#eee"/><g stroke="#2a2a2a" stroke-width="2.2"><path d="M250.5,650 V665 M243,657.5 H258 M245.2,652.2 L255.8,662.8 M255.8,652.2 L245.2,662.8"/></g><circle cx="250.5" cy="657.5" r="2" fill="#eee"/><rect x="267" y="643" width="15" height="14" fill="#fff" stroke="#777" stroke-width="0.9"/><rect x="267" y="643" width="15" height="2.5" fill="#3b86c0"/><g fill="#3b86c0"><rect x="269" y="647" width="3" height="2"/><rect x="269" y="650.5" width="3" height="2"/><rect x="269" y="654" width="3" height="2"/></g><g stroke="#888" stroke-width="1"><path d="M273.5,648 H280 M273.5,651.5 H280 M273.5,655 H280"/></g><path d="M279,652 L279,664 L282,661.5 L284.5,666 L286.5,665 L284,660.5 L288,660 Z" fill="#fff" stroke="#555" stroke-width="0.9"/><rect x="300.5" y="643" width="17.5" height="20" fill="#fafafa" stroke="#777" stroke-width="0.9"/><rect x="300.5" y="643" width="17.5" height="2.8" fill="#3b86c0"/><g fill="#555"><rect x="302.5" y="647.5" width="4" height="3"/><rect x="308" y="647.5" width="4" height="3"/><rect x="302.5" y="653" width="4" height="3"/><rect x="308" y="653" width="4" height="3"/><rect x="313" y="653" width="3.5" height="3"/><rect x="302.5" y="658.5" width="4" height="3"/></g><circle cx="337.5" cy="648.5" r="7" fill="#e8a040"/><path d="M337.5,648.5 L337.5,641.5 A7,7 0 0 1 344.5,648.5 Z" fill="#40b040"/><path d="M337.5,648.5 L344.5,648.5 A7,7 0 0 1 337.5,655.5 Z" fill="#3070c0"/><path d="M337.5,648.5 L337.5,655.5 A7,7 0 0 1 330.5,648.5 Z" fill="#e03030"/><rect x="339.5" y="648" width="14" height="15" fill="#fff" stroke="#777" stroke-width="0.9"/><rect x="339.5" y="648" width="14" height="2.5" fill="#3b86c0"/><g fill="#3b86c0"><rect x="341" y="652" width="3" height="2"/><rect x="341" y="655.5" width="3" height="2"/><rect x="341" y="659" width="3" height="2"/></g><g stroke="#888" stroke-width="1"><path d="M345,653 H351.5 M345,656.5 H351.5 M345,660 H351.5"/></g><path d="M373.5,641.5 L376.6,649.2 L384.8,649.5 L378.5,654.6 L380.8,662.6 L373.5,658 L366.2,662.6 L368.5,654.6 L362.2,649.5 L370.4,649.2 Z" fill="url(#blu2)" stroke="#1d5f8e" stroke-width="0.8"/><rect x="408" y="643" width="16.5" height="20" rx="1" fill="#f8f8f8" stroke="#666" stroke-width="0.9"/><g stroke="#333" stroke-width="1.3"><path d="M410.5,647 H422 M410.5,650.5 H422 M410.5,654 H422 M410.5,657.5 H422"/></g><g fill="#3b86c0"><rect x="424.5" y="645" width="2.5" height="3"/><rect x="424.5" y="650" width="2.5" height="3"/><rect x="424.5" y="655" width="2.5" height="3"/><rect x="424.5" y="659.5" width="2.5" height="3"/></g><rect x="439" y="649.5" width="6.5" height="6.5" fill="#5ab0e0" stroke="#2a7ab0" stroke-width="0.8"/><rect x="451.5" y="643" width="8.5" height="5.5" fill="#fff" stroke="#777" stroke-width="0.8"/><rect x="451.5" y="657.5" width="8.5" height="5.5" fill="#9a9a9a" stroke="#555" stroke-width="0.8"/><path d="M445.5,652.5 L451,646 M445.5,653 L451,660" stroke="#222" stroke-width="1.4" fill="none"/><rect x="469.5" y="643" width="23" height="12" fill="#e8e8e8" stroke="#666" stroke-width="0.9"/><rect x="472" y="645.5" width="10" height="6" fill="#ddd" stroke="#555" stroke-width="0.8"/><rect x="473.5" y="647" width="2.5" height="3" fill="#666"/><rect x="477.5" y="647" width="2.5" height="3" fill="#666"/><circle cx="486" cy="658.5" r="4.2" fill="#222"/><g stroke="#222" stroke-width="2"><path d="M486,652.5 V664.5 M480,658.5 H492 M481.8,654.3 L490.2,662.7 M490.2,654.3 L481.8,662.7"/></g><circle cx="486" cy="658.5" r="1.5" fill="#eee"/><g fill="#333"><ellipse cx="523.5" cy="645.5" rx="2" ry="1.5"/><circle cx="518.5" cy="650" r="1"/><ellipse cx="535.5" cy="645" rx="2" ry="1.5"/><circle cx="531" cy="649.5" r="1"/><ellipse cx="519" cy="658.5" rx="2" ry="1.5"/><circle cx="516" cy="663" r="1"/></g><path d="M525.5,650 L525.5,663 L528.5,660.5 L531,665.5 L533,664.5 L530.5,659.5 L534.5,659 Z" fill="#fff" stroke="#666" stroke-width="0.9"/><ellipse cx="558.3" cy="652.5" rx="11.8" ry="10.5" fill="url(#sph)"/><path d="M548,651 Q554,646 560,653 Q565,659 569,653" fill="none" stroke="#eee" stroke-width="1.3" opacity="0.8"/><path d="M611.5,641.5 H620 V653 L615.7,650 L611.5,653 Z" fill="#3a8ac4" stroke="#1d5f8e" stroke-width="0.8"/><path d="M618,645 H623 V661 H628 M623,649 H629" fill="none" stroke="#333" stroke-width="1.3"/><path d="M629,641.5 H635 V649 L632,647 L629,649 Z M629,656 H635 V663.5 L632,661.5 L629,663.5 Z" fill="#f4f4f4" stroke="#666" stroke-width="0.8"/><path d="M643.5,646 L654,642.5 L666,642.5 V659 L654,664 L643.5,660 Z" fill="#e8e8e8" stroke="#666" stroke-width="0.8"/><path d="M643.5,646 L654,649 V664 L643.5,660 Z" fill="url(#blu)" stroke="#1d5f8e" stroke-width="0.8"/><g stroke="#888" stroke-width="0.8"><path d="M656.5,648 V663 M659.5,647 V662 M662.5,646 V661"/></g><text x="680" y="661" font-family="Liberation Serif" font-style="italic" font-size="22" fill="#222" textLength="23" lengthAdjust="spacingAndGlyphs">fx</text><path d="M720.5,645.5 L727.5,664" stroke="#2a7ab0" stroke-width="2.5"/><path d="M719.7,643.5 L722,649.5" stroke="#888" stroke-width="2.5"/><g fill="#333"><circle cx="713" cy="646.5" r="0.9"/><circle cx="715.5" cy="644" r="0.9"/><circle cx="725.5" cy="643.5" r="0.9"/><circle cx="728" cy="647.5" r="0.9"/></g><rect x="743.5" y="643" width="23.5" height="20" fill="#f4f4f4" stroke="#777" stroke-width="0.9"/><rect x="743.5" y="643" width="23.5" height="3.5" fill="#3b96d0"/><g stroke="#999" stroke-width="0.9"><path d="M743.5,651 H767 M743.5,656 H767 M751.5,646.5 V663 M759.5,646.5 V663"/></g><path d="M794.5,649 L787.5,642 L776,653 L785,663" fill="none" stroke="#2a7ab0" stroke-width="1.6"/><path d="M778.5,653.5 L788,644.5" stroke="#222" stroke-width="1.2"/><path d="M777,655 L778,651 L781,654 Z M789.5,643 L785.5,644 L788.5,647 Z" fill="#222"/><path d="M791,658.5 H797 M791,661.5 H797" stroke="#333" stroke-width="1.3"/><rect x="813.5" y="642" width="11.5" height="22" rx="2.5" fill="#e6e6e6" stroke="#bbb" stroke-width="0.8"/><circle cx="819.2" cy="646.5" r="3.3" fill="#e8b8b8"/><circle cx="819.2" cy="653" r="3.3" fill="#e8d0b0"/><circle cx="819.2" cy="659.5" r="3.3" fill="#50d050"/><rect x="837.5" y="641" width="26.5" height="26" rx="1" fill="#f4f4f4" stroke="#555" stroke-width="1.2"/><rect x="841.5" y="644" width="2.5" height="20" rx="1" fill="#2a7ab0"/><rect x="840" y="655" width="5.5" height="3" fill="#666"/><ellipse cx="855.5" cy="646.5" rx="6" ry="2.5" fill="#ccc" stroke="#777" stroke-width="0.7"/><path d="M849.5,646.5 V661.5 Q855.5,665 861.5,661.5 V646.5" fill="#d6d6d6" stroke="#777" stroke-width="0.7"/><path d="M849.5,651.5 Q855.5,654.5 861.5,651.5 M849.5,656.5 Q855.5,659.5 861.5,656.5" fill="none" stroke="#888" stroke-width="0.7"/><path d="M891,646.5 L899,643 L907.5,646.5 L899,650 Z" fill="#f8f8f8" stroke="#777" stroke-width="0.7"/><path d="M891,646.5 L899,650 V660 L891,656.5 Z" fill="#e4e4e4" stroke="#777" stroke-width="0.7"/><path d="M899,650 L907.5,646.5 V656.5 L899,660 Z" fill="#3b96d0" stroke="#1d5f8e" stroke-width="0.7"/><rect x="887" y="653.5" width="10" height="9" fill="none" stroke="#777" stroke-width="0.8" stroke-dasharray="1.5,1"/><path d="M886,653 Q885,647 890,646" fill="none" stroke="#333" stroke-width="1.3"/><path d="M947.5,645 L952,641 H973 V660 L967.5,665 H947.5 Z" fill="#e8e8e8" stroke="#555" stroke-width="1"/><rect x="950" y="647" width="15" height="15" fill="#fff" stroke="#444" stroke-width="0.9"/><path d="M952.5,654 L957.5,651 L962.5,654 V660 L957.5,662 L952.5,660 Z" fill="#2a86c4"/><path d="M955,642 L960,640.5 L964,643" fill="none" stroke="#2a86c4" stroke-width="1.5"/><path d="M984.5,643 H992 Q995,646 998,643 H1006.5 V659 H984.5 Z" fill="url(#blu)" stroke="#1d5f8e" stroke-width="0.8"/><circle cx="990" cy="651" r="4" fill="#9fd4ee"/><path d="M995,654.64 L1001.0,651 L1007,654.64 L1001.0,658.28 Z" fill="#fbfbfb" stroke="#6a6a6a" stroke-width="0.8" stroke-linejoin="round"/><path d="M995,654.64 L1001.0,658.28 L1001.0,664 L995,660.36 Z" fill="#e2e2e2" stroke="#6a6a6a" stroke-width="0.8" stroke-linejoin="round"/><path d="M1001.0,658.28 L1007,654.64 L1007,660.36 L1001.0,664 Z" fill="#c6c6c6" stroke="#6a6a6a" stroke-width="0.8" stroke-linejoin="round"/><path d="M994,664 L998,657" stroke="#333" stroke-width="1.2"/><path d="M1028.5,645.5 H1049 M1031.5,643 L1028.5,645.5 L1031.5,648 M1046,643 L1049,645.5 L1046,648" fill="none" stroke="#222" stroke-width="1.3"/><rect x="1028.5" y="656" width="12" height="7" fill="#3b96d0"/><g stroke="#1d5f8e" stroke-width="0.8"><path d="M1031,663 V660 M1034,663 V661 M1037,663 V660"/></g><path d="M1040.5,654.64 L1046.25,651 L1052.0,654.64 L1046.25,658.28 Z" fill="#fbfbfb" stroke="#6a6a6a" stroke-width="0.8" stroke-linejoin="round"/><path d="M1040.5,654.64 L1046.25,658.28 L1046.25,664 L1040.5,660.36 Z" fill="#e2e2e2" stroke="#6a6a6a" stroke-width="0.8" stroke-linejoin="round"/><path d="M1046.25,658.28 L1052.0,654.64 L1052.0,660.36 L1046.25,664 Z" fill="#c6c6c6" stroke="#6a6a6a" stroke-width="0.8" stroke-linejoin="round"/><rect x="1066" y="641.5" width="6" height="5" fill="#5ab0e0" stroke="#1d5f8e" stroke-width="0.7"/><path d="M1060.5,648 Q1069,644.5 1077.5,648 V657 Q1069,660.5 1060.5,657 Z" fill="url(#blu)" stroke="#1d5f8e" stroke-width="0.8"/><path d="M1071.5,656.86 L1077.25,653.5 L1083.0,656.86 L1077.25,660.22 Z" fill="#fbfbfb" stroke="#6a6a6a" stroke-width="0.8" stroke-linejoin="round"/><path d="M1071.5,656.86 L1077.25,660.22 L1077.25,665.5 L1071.5,662.14 Z" fill="#e2e2e2" stroke="#6a6a6a" stroke-width="0.8" stroke-linejoin="round"/><path d="M1077.25,660.22 L1083.0,656.86 L1083.0,662.14 L1077.25,665.5 Z" fill="#c6c6c6" stroke="#6a6a6a" stroke-width="0.8" stroke-linejoin="round"/><path d="M1092.5,648 L1116,642 V659 L1092.5,665 Z" fill="#ececec" stroke="#888" stroke-width="0.8"/><path d="M1097,650 L1102,649 V661 L1097,662 Z M1107,647.5 L1112,646 V658 L1107,659.5 Z" fill="#2a86c4"/><path d="M1102,649 L1107,647.5 V659.5 L1102,661 Z" fill="#fff"/><rect x="1136.5" y="642" width="15" height="11" fill="#f4f4f4" stroke="#777" stroke-width="0.8"/><rect x="1139.5" y="645" width="15" height="11" fill="#f0f0f0" stroke="#777" stroke-width="0.8"/><path d="M1146,663 L1158,651 L1160.5,653.5 L1148.5,665.5 Z" fill="#3b96d0" stroke="#222" stroke-width="0.8"/><path d="M1146,653 L1158,665" stroke="#222" stroke-width="1.8"/><rect x="1177" y="641" width="4.5" height="25" fill="#f4f4f4" stroke="#555" stroke-width="0.8"/><rect x="1173.5" y="656.5" width="24" height="4" fill="#f4f4f4" stroke="#555" stroke-width="0.8"/><path d="M1188,642 V653 M1186,644.5 L1188,642 L1190,644.5 M1186,650.5 L1188,653 L1190,650.5 M1177,664.5 H1196 M1179.5,662.5 L1177,664.5 L1179.5,666.5 M1193.5,662.5 L1196,664.5 L1193.5,666.5" fill="none" stroke="#2a86c4" stroke-width="1"/><path d="M1212,655 L1215,650.5 L1213.5,655.5 L1216,655 L1211.5,662 L1213,656.5 Z" fill="#222"/><path d="M1213,646 L1215,644 L1217,646 L1215,648 Z" fill="#2a86c4"/><path d="M1218,653.7 L1225.0,649.5 L1232,653.7 L1225.0,657.9 Z" fill="#fbfbfb" stroke="#6a6a6a" stroke-width="0.8" stroke-linejoin="round"/><path d="M1218,653.7 L1225.0,657.9 L1225.0,664.5 L1218,660.3 Z" fill="#e2e2e2" stroke="#6a6a6a" stroke-width="0.8" stroke-linejoin="round"/><path d="M1225.0,657.9 L1232,653.7 L1232,660.3 L1225.0,664.5 Z" fill="#c6c6c6" stroke="#6a6a6a" stroke-width="0.8" stroke-linejoin="round"/><path d="M1233,644.5 H1226.5 V641.5 L1220,646.5 L1226.5,651.5 V648.5 H1233 Z" fill="#3b96d0" stroke="#1d5f8e" stroke-width="0.6"/><path d="M1261.5,652 L1267,645 L1282,649 L1285,656 V664 L1270,666 L1261.5,660 Z" fill="url(#blu)" stroke="#1d5f8e" stroke-width="0.8"/><rect x="1264" y="641.5" width="3" height="7" fill="#eee" stroke="#666" stroke-width="0.6"/><rect x="1269" y="640.5" width="3" height="7" fill="#eee" stroke="#666" stroke-width="0.6"/><rect x="1281" y="657" width="5" height="8" fill="#5ab0e0" stroke="#1d5f8e" stroke-width="0.6"/></svg>
<div id="task" class="a"></div>
<svg class="a" style="left:0;top:692px" width="1290" height="33" viewBox="0 692 1290 33"><defs><radialGradient id="edge" cx="0.6" cy="0.3" r="0.8"><stop offset="0" stop-color="#5fe08a"/><stop offset="0.5" stop-color="#1a9ad8"/><stop offset="1" stop-color="#0a5aa8"/></radialGradient></defs><rect x="290" y="692" width="38.7" height="32" fill="#34405e"/><path d="M13.5,702.5 L19.3,701.7 V707.6 H13.5 Z M20.5,701.5 L27,700.6 V707.6 H20.5 Z M13.5,708.7 H19.3 V714.5 L13.5,713.8 Z M20.5,708.7 H27 V715.5 L20.5,714.7 Z" fill="#fff"/><circle cx="61.5" cy="705.5" r="4.3" fill="none" stroke="#fff" stroke-width="1.2"/><path d="M58.5,708.5 L54.5,712.5" stroke="#fff" stroke-width="1.3"/><path d="M94.5,702.5 H103.5 M94.5,713.5 H103.5" stroke="#fff" stroke-width="1.1"/><rect x="95.5" y="704.5" width="7" height="7" fill="none" stroke="#fff" stroke-width="1.1"/><path d="M106.5,702 V714" stroke="#fff" stroke-width="1.1"/><circle cx="106.5" cy="707" r="1.3" fill="#fff"/><rect x="135" y="703" width="18.5" height="12" rx="1" fill="#38a8e8"/><circle cx="140" cy="708.5" r="3" fill="#f0c040"/><path d="M145,705.5 H151.5 M145,708.5 H151.5 M145,711.5 H151.5" stroke="#fff" stroke-width="1"/><circle cx="186" cy="702.5" r="2.6" fill="#7b83eb"/><circle cx="191" cy="703.5" r="2" fill="#7b83eb"/><rect x="183" y="705.5" width="12" height="10" rx="3" fill="#5b5fc7"/><rect x="175" y="703.5" width="11" height="11" rx="1.5" fill="#4b53bc"/><text x="177.5" y="712.5" font-family="Liberation Sans" font-size="8.5" font-weight="bold" fill="#fff">T</text><circle cx="191" cy="714" r="5" fill="#d0243a" stroke="#1b2743" stroke-width="0.8"/><text x="188.3" y="717.3" font-family="Liberation Sans" font-size="8" font-weight="bold" fill="#fff">2</text><circle cx="227" cy="708" r="9" fill="url(#edge)"/><path d="M220,710 Q222,702 230,703 Q235,705 233,709 Q229,712 225,711 Q223,716 229,716.5 Q222,717 220,710 Z" fill="#0c4a90" opacity="0.8"/><circle cx="268.8" cy="708" r="9.5" fill="#e33b2e"/><path d="M268.8,708 L260.6,712.75 A9.5,9.5 0 0 0 273.5,716.2 Z" fill="#2fa84f"/><path d="M268.8,708 L277.8,704.5 A9.5,9.5 0 0 1 273.5,716.2 Z" fill="#fbc02d"/><circle cx="268.8" cy="708" r="4.4" fill="#fff"/><circle cx="268.8" cy="708" r="3.4" fill="#1a73e8"/><path d="M300.5,702 H307 L309,704 H319.5 V716 H300.5 Z" fill="#f5c542"/><rect x="300.5" y="706" width="19" height="10" fill="#ffd866"/><rect x="305" y="710" width="10" height="6" fill="#1e90d8"/><rect x="307" y="712.5" width="6" height="3.5" fill="#ffd866"/><rect x="346.5" y="701" width="14" height="15" rx="1" fill="#1e74c8"/><rect x="342" y="703.5" width="10.5" height="10.5" rx="1" fill="#0a5ab0"/><text x="344.2" y="712.3" font-family="Liberation Sans" font-size="8.5" font-weight="bold" fill="#fff">O</text><rect x="388" y="701.5" width="15" height="15" rx="1" fill="#2b6fd0"/><rect x="383.5" y="704" width="10.5" height="10.5" rx="1" fill="#1c50a8"/><text x="384.5" y="712.5" font-family="Liberation Sans" font-size="8" font-weight="bold" fill="#fff">W</text><circle cx="435.2" cy="708" r="9.3" fill="#1e5a90"/><circle cx="435.2" cy="704" r="6" fill="#4a8cc0" opacity="0.7"/><path d="M433,705 V711 L438,708 Z" fill="none" stroke="#fff" stroke-width="0.8"/><circle cx="476.9" cy="708" r="9.3" fill="#1a1a1a" stroke="#ddd" stroke-width="1.1"/><g fill="none" stroke="#ddd" stroke-width="1.2"><circle cx="476.9" cy="703.8" r="3.2"/><circle cx="473.2" cy="710.2" r="3.2"/><circle cx="480.6" cy="710.2" r="3.2"/></g><circle cx="884" cy="708" r="8" fill="#f39a20"/><circle cx="892.5" cy="700" r="2" fill="#e03030"/><ellipse cx="881" cy="702.5" rx="5.5" ry="3" fill="#c8e0f4"/><ellipse cx="889" cy="714" rx="6.5" ry="3.2" fill="#c8e0f4"/><text y="714.7" font-family="Liberation Sans" font-size="13" fill="#fff"><tspan x="902" textLength="23" lengthAdjust="spacingAndGlyphs">-1°C</tspan><tspan x="932.5" textLength="64" lengthAdjust="spacingAndGlyphs">Partly sunny</tspan></text><path d="M1010.5,712.5 L1015,707.5 L1019.5,712.5" fill="none" stroke="#fff" stroke-width="1.1"/><ellipse cx="1035" cy="709" rx="6.5" ry="4" fill="#2a8ae0"/><circle cx="1038" cy="705.5" r="3.5" fill="#2a8ae0"/><circle cx="1039.5" cy="711.5" r="3" fill="#fff"/><circle cx="1039.5" cy="711.5" r="2.2" fill="#3aa0f0"/><rect x="1054" y="701.5" width="5" height="9" rx="2.5" fill="#eee"/><path d="M1052,707 Q1052,713 1056.5,713 Q1061,713 1061,707 M1056.5,713 V716 M1053.5,716 H1059.5" fill="none" stroke="#eee" stroke-width="1"/><g fill="none" stroke="#ddd" stroke-width="1.1"><path d="M1071.5,714 Q1072,705 1081,703.5"/><path d="M1074.5,714 Q1075,708 1081,706.5"/><path d="M1077.5,714 Q1078,711 1081,710"/></g><circle cx="1080.5" cy="713.5" r="0.9" fill="#ddd"/><path d="M1089.5,704 L1102,701.5 V714 L1089.5,716.5 Z" fill="none" stroke="#ddd" stroke-width="1.1"/><circle cx="1100.5" cy="714.5" r="2.5" fill="#2a8ae0"/><path d="M1110.5,705.5 H1113 L1116.5,702.5 V714.5 L1113,711.5 H1110.5 Z" fill="none" stroke="#ddd" stroke-width="1"/><path d="M1118.5,706 Q1120,708.5 1118.5,711 M1121,704 Q1123.5,708.5 1121,713" fill="none" stroke="#ddd" stroke-width="1"/><path d="M1134,715 Q1136,709 1141,704 Q1144,701 1146,703 Q1147,706 1141,709 L1139,712 Q1143,710 1145.5,711" fill="none" stroke="#ddd" stroke-width="1.1"/><text x="1159" y="712.5" font-family="Liberation Sans" font-size="11" fill="#fff" textLength="19.3" lengthAdjust="spacingAndGlyphs">ENG</text><text x="1196.2" y="704.5" font-family="Liberation Sans" font-size="10.5" fill="#fff" textLength="35.8" lengthAdjust="spacingAndGlyphs">9:49 AM</text><text x="1189.4" y="719.8" font-family="Liberation Sans" font-size="10.5" fill="#fff" textLength="50.3" lengthAdjust="spacingAndGlyphs">2023-03-31</text><path d="M1256,702 H1269.5 V712 H1262 L1258.5,715.5 V712 H1256 Z" fill="#eee"/><path d="M1258,705 H1267.5 M1258,707.5 H1267.5 M1258,710 H1265" stroke="#999" stroke-width="0.9"/><circle cx="1268.5" cy="715.5" r="6" fill="#1a1a1a" stroke="#555" stroke-width="0.6"/><text x="1265.3" y="719.3" font-family="Liberation Sans" font-size="10" fill="#fff">7</text></svg>
<div class="a" style="left:0;top:0;width:1290px;height:1px;background:#fdee3a"></div>
<div class="a" style="left:0;top:1px;width:1290px;height:1px;background:#7f7a40"></div>
<div class="a" style="left:0;top:0;width:1px;height:725px;background:#dccd22"></div>
<div class="a" style="left:1px;top:1px;width:1px;height:723px;background:#4a5030"></div>
<div class="a" style="left:1289px;top:0;width:1px;height:725px;background:#dccd22"></div>
<div class="a" style="left:1288px;top:1px;width:1px;height:723px;background:#4a5030"></div>
<div class="a" style="left:2px;top:723px;width:1286px;height:1px;background:#101a36"></div>
<div class="a" style="left:0;top:724px;width:1290px;height:1px;background:#8b7d12"></div>
</body></html>
